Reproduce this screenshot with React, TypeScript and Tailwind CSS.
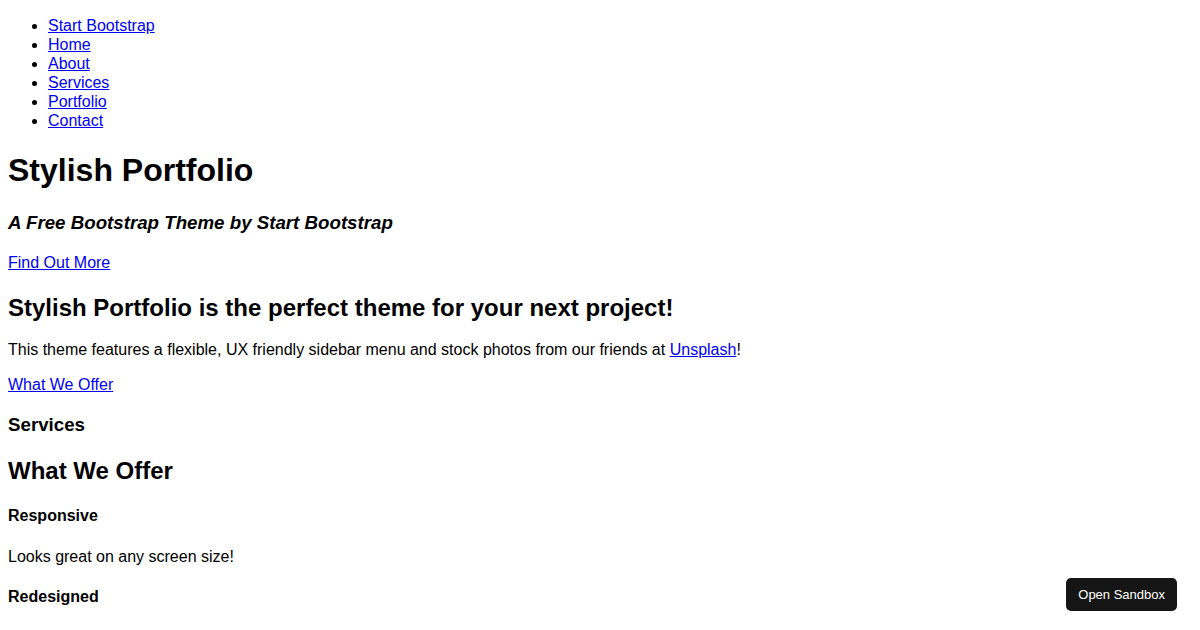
const linkCls = "text-[#0000ee] underline"

const navItems = ["Start Bootstrap", "Home", "About", "Services", "Portfolio", "Contact"]

export default function App() {
  return (
    <div className="min-h-[630px] bg-white text-black font-['Liberation_Sans',Arial,sans-serif] text-[16px] leading-[19px]">
      <div className="mx-2 pt-4 pb-2">
        {/* Sidebar nav (unstyled) */}
        <ul className="list-disc pl-10">
          {navItems.map((item) => (
            <li key={item}>
              <a href="#" className={linkCls}>
                {item}
              </a>
            </li>
          ))}
        </ul>

        {/* Header */}
        <h1 className="mt-[22px] text-[32px] leading-[37px] font-bold">Stylish Portfolio</h1>
        <h3 className="mt-[23px] text-[18.72px] leading-[22px] font-bold">
          <em>A Free Bootstrap Theme by Start Bootstrap</em>
        </h3>
        <p className="mt-[18.5px]">
          <a href="#" className={linkCls}>
            Find Out More
          </a>
        </p>

        {/* About */}
        <h2 className="mt-[22px] text-[24px] leading-[28px] font-bold">
          Stylish Portfolio is the perfect theme for your next project!
        </h2>
        <p className="mt-[18px]">
          This theme features a flexible, UX friendly sidebar menu and stock photos from our friends at{" "}
          <a href="#" className={linkCls}>
            Unsplash
          </a>
          !
        </p>
        <p className="mt-4">
          <a href="#" className={linkCls}>
            What We Offer
          </a>
        </p>

        {/* Services */}
        <h3 className="mt-[20.5px] text-[18.72px] leading-[22px] font-bold">Services</h3>
        <h2 className="mt-[21px] text-[24px] leading-[28px] font-bold">What We Offer</h2>
        <h4 className="mt-[21px] text-[16px] font-bold">Responsive</h4>
        <p className="mt-[22px]">Looks great on any screen size!</p>
        <h4 className="mt-[21px] text-[16px] font-bold">Redesigned</h4>
      </div>

      <button className="fixed right-[23px] bottom-[19px] h-[33px] rounded-[5px] bg-[#151515] px-[12px] text-[13px] leading-[33px] text-white font-['Liberation_Sans',Arial,sans-serif]">
        Open Sandbox
      </button>
    </div>
  )
}
